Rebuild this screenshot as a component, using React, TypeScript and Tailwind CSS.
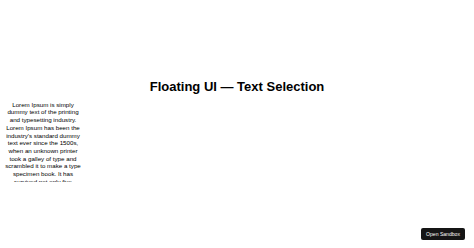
const text =
  "Lorem Ipsum is simply dummy text of the printing and typesetting industry. Lorem Ipsum has been the industry's standard dummy text ever since the 1500s, when an unknown printer took a galley of type and scrambled it to make a type specimen book. It has survived not only five centuries, but also the leap into electronic typesetting, remaining essentially unchanged.";

export default function App() {
  return (
    <div
      className="relative h-[248px] w-full overflow-hidden bg-white text-black"
      style={{ fontFamily: '"Liberation Sans", Arial, sans-serif' }}
    >
      <h1 className="pt-[79px] text-center text-[13px] font-bold leading-[15px]">
        Floating UI — Text Selection
      </h1>
      <div className="mt-[6.7px] ml-[3px] h-[81.5px] w-[80px] overflow-hidden text-center text-[6.2px] leading-[7.7px]">
        {text}
      </div>
      <button className="absolute right-[9px] bottom-[8px] h-[12px] rounded-[2px] bg-[#151515] px-[5px] text-[5.1px] leading-[12px] text-white">
        Open Sandbox
      </button>
    </div>
  );
}
